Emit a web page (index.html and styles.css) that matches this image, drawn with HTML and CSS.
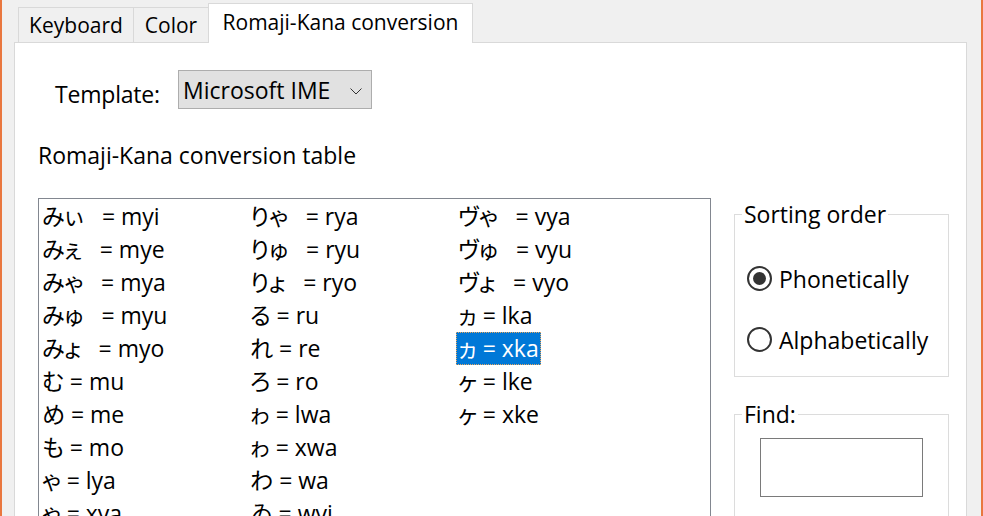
FILE: index.html
```html
<!DOCTYPE html>
<html lang="ja">
<head>
<meta charset="utf-8">
<title>Romaji-Kana conversion</title>
<link rel="stylesheet" href="styles.css">
</head>
<body>
<div class="window">
  <div class="tabs">
    <div class="tab tab-keyboard">Keyboard</div>
    <div class="tab tab-color">Color</div>
    <div class="tab tab-active">Romaji-Kana conversion</div>
  </div>
  <div class="panel">
    <div class="template-row">
      <span class="template-label">Template:</span>
      <div class="combo">
        <span class="combo-text">Microsoft IME</span>
        <svg class="chevron" width="12" height="7" viewBox="0 0 12 7"><path d="M0.5 0.5 L6 6 L11.5 0.5" fill="none" stroke="#333" stroke-width="1"/></svg>
      </div>
    </div>
    <div class="table-title">Romaji-Kana conversion table</div>
    <div class="main">
      <div class="listbox">
        <div class="col">
          <div class="item"><span class="k">みぃ</span>   = myi</div>
          <div class="item"><span class="k">みぇ</span>   = mye</div>
          <div class="item"><span class="k">みゃ</span>   = mya</div>
          <div class="item"><span class="k">みゅ</span>   = myu</div>
          <div class="item"><span class="k">みょ</span>   = myo</div>
          <div class="item"><span class="k">む</span> = mu</div>
          <div class="item"><span class="k">め</span> = me</div>
          <div class="item"><span class="k">も</span> = mo</div>
          <div class="item"><span class="k">ゃ</span> = lya</div>
          <div class="item"><span class="k">ゃ</span> = xya</div>
          <div class="item"><span class="k">や</span> = ya</div>
        </div>
        <div class="col">
          <div class="item"><span class="k">りゃ</span>   = rya</div>
          <div class="item"><span class="k">りゅ</span>   = ryu</div>
          <div class="item"><span class="k">りょ</span>   = ryo</div>
          <div class="item"><span class="k">る</span> = ru</div>
          <div class="item"><span class="k">れ</span> = re</div>
          <div class="item"><span class="k">ろ</span> = ro</div>
          <div class="item"><span class="k">ゎ</span> = lwa</div>
          <div class="item"><span class="k">ゎ</span> = xwa</div>
          <div class="item"><span class="k">わ</span> = wa</div>
          <div class="item"><span class="k">ゐ</span> = wyi</div>
          <div class="item"><span class="k">ゑ</span> = wye</div>
        </div>
        <div class="col">
          <div class="item"><span class="k">ヴゃ</span>   = vya</div>
          <div class="item"><span class="k">ヴゅ</span>   = vyu</div>
          <div class="item"><span class="k">ヴょ</span>   = vyo</div>
          <div class="item"><span class="k">ヵ</span> = lka</div>
          <div class="item sel"><span class="k">ヵ</span> = xka</div>
          <div class="item"><span class="k">ヶ</span> = lke</div>
          <div class="item"><span class="k">ヶ</span> = xke</div>
        </div>
      </div>
      <div class="side">
        <fieldset class="group sort">
          <legend>Sorting order</legend>
          <div class="radio"><span class="radio-circle checked"></span><span>Phonetically</span></div>
          <div class="radio"><span class="radio-circle"></span><span>Alphabetically</span></div>
        </fieldset>
        <fieldset class="group find">
          <legend>Find:</legend>
          <div class="textbox"></div>
        </fieldset>
      </div>
    </div>
  </div>
</div>
</body>
</html>
```

FILE: styles.css
```css
* { box-sizing: border-box; }
html, body { margin: 0; padding: 0; }
body {
  width: 983px;
  height: 516px;
  overflow: hidden;
  background: #f0f0f0;
  font-family: "Open Sans", "Noto Sans", "Noto Sans CJK JP", sans-serif;
  font-size: 23px;
  color: #000;
}
.window {
  height: 516px;
  border-left: 2px solid #e9773f;
  border-right: 2px solid #e9773f;
  padding: 0 14px 0 12px;
  overflow: hidden;
}
.tabs {
  display: flex;
  align-items: flex-end;
  height: 42px;
  padding-left: 4px;
}
.tab {
  position: relative;
  height: 35px;
  border: 1px solid #d9d9d9;
  border-bottom: 0;
  background: #f0f0f0;
  font-size: 21px;
  line-height: 34px;
  text-align: center;
  white-space: nowrap;
}
.tab + .tab { margin-left: -1px; }
.tab-keyboard { width: 116px; }
.tab-color { width: 76px; }
.tab-active {
  width: 265px;
  height: 40px;
  margin-bottom: -1px;
  padding-top: 1px;
  background: #fff;
  z-index: 1;
}
.panel {
  height: 480px;
  background: #fff;
  border: 1px solid #d9d9d9;
  padding: 27px 0 0 23px;
}
.template-row {
  display: flex;
  align-items: flex-start;
  height: 39px;
  margin-left: 17px;
}
.template-label {
  width: 123px;
  line-height: 28px;
  padding-top: 10px;
  letter-spacing: -0.2px;
}
.combo {
  display: flex;
  align-items: flex-start;
  width: 194px;
  height: 39px;
  border: 1px solid #adadad;
  background: #e1e1e1;
  padding-left: 4px;
}
.combo-text {
  line-height: 28px;
  padding-top: 5px;
  white-space: nowrap;
}
.chevron {
  margin-left: auto;
  margin-right: 9px;
  margin-top: 17px;
}
.table-title {
  line-height: 28px;
  margin-top: 32px;
}
.main {
  display: flex;
  align-items: flex-start;
  margin-top: 29px;
}
.listbox {
  flex-shrink: 0;
  display: flex;
  width: 673px;
  height: 760px;
  border: 1px solid #828790;
  padding: 1px;
}
.col {
  width: 208px;
  display: flex;
  flex-direction: column;
  align-items: flex-start;
}
.item {
  height: 33px;
  line-height: 33px;
  padding: 0 2px;
  white-space: pre;
}
.item.sel {
  background: #0078d7;
  color: #fff;
  outline: 1px dotted #e8a860;
  outline-offset: -1px;
}
.k {
  font-family: "Noto Sans CJK JP", sans-serif;
  font-feature-settings: "palt";
  line-height: 0;
}
.side {
  flex-shrink: 0;
  width: 215px;
  margin-left: 23px;
}
.group {
  margin: 0;
  padding: 0;
  min-width: 0;
  border: 1px solid #dcdcdc;
}
.group legend {
  margin-left: 7px;
  padding: 0 2px;
  line-height: 30px;
}
.sort {
  margin-top: 1px;
  padding: 19px 0 6px;
}
.radio {
  display: flex;
  align-items: center;
  height: 61px;
  margin-left: 12px;
  line-height: 30px;
}
.radio-circle {
  display: flex;
  align-items: center;
  justify-content: center;
  width: 25px;
  height: 25px;
  margin-right: 7px;
  border: 2px solid #333;
  border-radius: 50%;
}
.radio-circle.checked::after {
  content: "";
  width: 13px;
  height: 13px;
  border-radius: 50%;
  background: #333;
}
.find {
  margin-top: 22px;
  padding: 0 0 40px;
}
.textbox {
  width: 163px;
  height: 59px;
  margin: 9px 0 0 25px;
  border: 1px solid #7a7a7a;
  background: #fff;
}
```
